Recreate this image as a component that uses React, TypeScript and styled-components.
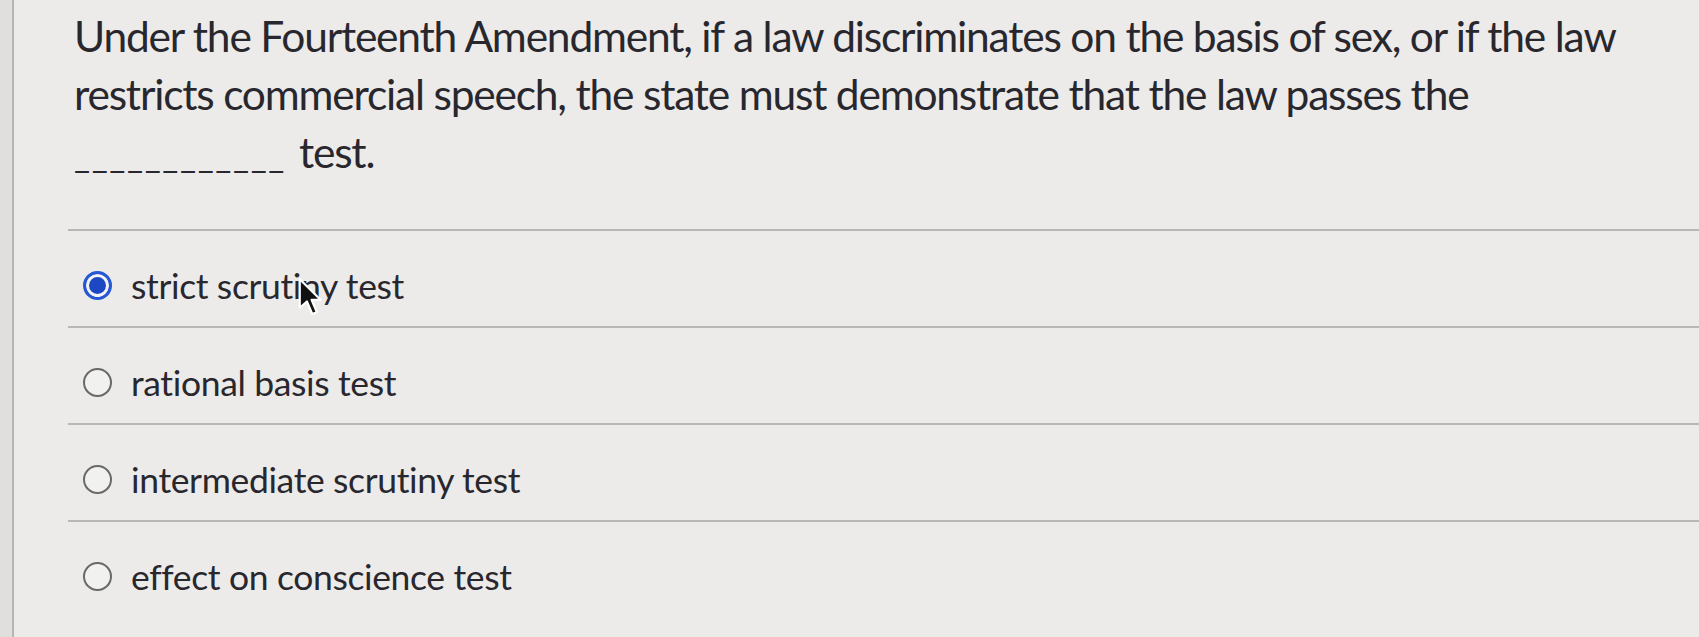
import { createGlobalStyle, styled } from "styled-components"

const GlobalStyle = createGlobalStyle`
    html, body {
        margin: 0;
        padding: 0;
        background: #ecebe9;
    }

    body {
        font-family: Lato, "Open Sans", sans-serif;
        color: #29272e;
    }
`

const Page = styled.div`
    display: flex;
    height: 100vh;
    overflow: hidden;
`

const Gutter = styled.div`
    width: 12px;
    flex-shrink: 0;
    background: #e0dfdd;
    border-right: 2px solid #b6b5b3;
`

const Content = styled.main`
    flex-grow: 1;
    padding-left: 54px;
    position: relative;
`

const Question = styled.p`
    margin: 0;
    padding: 7px 0 0 6px;
    font-size: 42.5px;
    line-height: 58px;
    letter-spacing: -1.2px;
    white-space: nowrap;
    height: 229px;
    box-sizing: border-box;
`

const Blank = styled.span`
    font-size: 35px;
    letter-spacing: 1.6px;
    margin-right: 13px;
`

const Answers = styled.ul`
    list-style: none;
    margin: 0;
    padding: 0;
`

const Answer = styled.li`
    display: flex;
    align-items: center;
    gap: 19px;
    height: 97px;
    box-sizing: border-box;
    padding: 14px 0 0 15px;
    border-top: 2px solid #b8b7b6;
    font-size: 35.5px;
    letter-spacing: -0.35px;
`

const Radio = styled.span<{ $checked?: boolean }>`
    width: 29px;
    height: 29px;
    flex-shrink: 0;
    box-sizing: border-box;
    border-radius: 50%;
    border: ${p => p.$checked ? "3px solid #2557d6" : "2.5px solid #69686b"};
    background: ${p => p.$checked ? "#1c48c4" : "#f1f1ef"};
    box-shadow: ${p => p.$checked ? "inset 0 0 0 3px #f4f4f4" : "none"};
`

// mouse pointer sitting over the first answer
const Pointer = styled.svg`
    position: absolute;
    left: 284px;
    top: 277px;
    width: 25px;
    height: 40px;
`

const answers = [
    "strict scrutiny test",
    "rational basis test",
    "intermediate scrutiny test",
    "effect on conscience test",
]

export default () => <>
    <GlobalStyle />
    <Page>
        <Gutter />
        <Content>
            <Question>
                Under the Fourteenth Amendment, if a law discriminates on the basis of sex, or if the law
                <br />
                restricts commercial speech, the state must demonstrate that the law passes the
                <br />
                <Blank>____________</Blank>test.
            </Question>
            <Answers>
                {answers.map((a, i) => (
                    <Answer key={a}>
                        <Radio $checked={i === 0} />
                        {a}
                    </Answer>
                ))}
            </Answers>
            <Pointer viewBox="0 0 14 22">
                <path d="M1 1 L1 17 L5 13.5 L8 20.5 L10.5 19.5 L7.6 12.6 L12.6 12.6 Z" fill="#111" stroke="#fff" strokeWidth="1.2" strokeLinejoin="round" />
            </Pointer>
        </Content>
    </Page>
</>
